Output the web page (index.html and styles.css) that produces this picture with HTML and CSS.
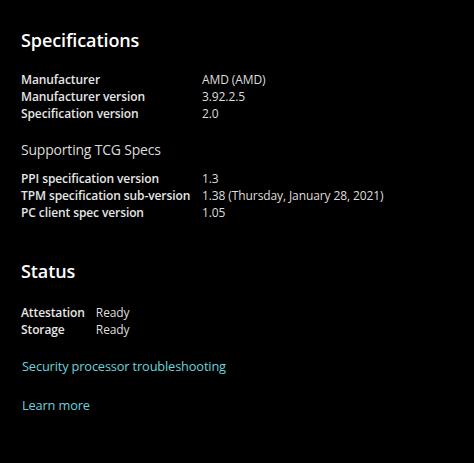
FILE: index.html
```html
<!DOCTYPE html>
<html>
<head>
<meta charset="utf-8">
<link rel="stylesheet" href="styles.css">
</head>
<body>
<main class="page">
  <h1 class="title">Specifications</h1>
  <dl class="props props-wide">
    <dt>Manufacturer</dt><dd>AMD (AMD)</dd>
    <dt>Manufacturer version</dt><dd>3.92.2.5</dd>
    <dt>Specification version</dt><dd>2.0</dd>
  </dl>
  <h2 class="subtitle">Supporting TCG Specs</h2>
  <dl class="props props-wide">
    <dt>PPI specification version</dt><dd>1.3</dd>
    <dt>TPM specification sub-version</dt><dd>1.38 (Thursday, January 28, 2021)</dd>
    <dt>PC client spec version</dt><dd>1.05</dd>
  </dl>
  <h1 class="title title-status">Status</h1>
  <dl class="props props-auto">
    <dt>Attestation</dt><dd>Ready</dd>
    <dt>Storage</dt><dd>Ready</dd>
  </dl>
  <a class="link link-first" href="#">Security processor troubleshooting</a>
  <a class="link link-second" href="#">Learn more</a>
</main>
</body>
</html>
```
FILE: styles.css
```css
html, body {
  margin: 0;
  padding: 0;
  background: #000;
}
body {
  width: 474px;
  height: 463px;
  overflow: hidden;
  font-family: "Open Sans", "Noto Sans", sans-serif;
  color: #e8e8e8;
}
.page {
  padding: 27px 0 0 21px;
  display: flex;
  flex-direction: column;
  align-items: flex-start;
}
.title {
  margin: 0;
  font-size: 18px;
  font-weight: 600;
  line-height: 26px;
  color: #fff;
  letter-spacing: -0.1px;
}
.subtitle {
  margin: 18px 0 0 0;
  font-size: 14px;
  font-weight: 400;
  line-height: 20px;
  color: #dcdcdc;
  letter-spacing: -0.2px;
}
.props {
  display: grid;
  margin: 0;
  font-size: 12px;
  line-height: 17px;
  letter-spacing: -0.1px;
}
.title + .props { margin-top: 18px; }
.subtitle + .props { margin-top: 10px; }
.props-wide { grid-template-columns: 181px auto; }
.props-auto { grid-template-columns: auto auto; column-gap: 11px; margin-top: 20px !important; }
.props dt {
  font-weight: 600;
  color: #e6e6e6;
  white-space: nowrap;
}
.props dd {
  margin: 0;
  font-weight: 400;
  color: #dedede;
  white-space: nowrap;
}
.title-status { margin-top: 37px; }
.link {
  display: block;
  margin-left: 1px;
  font-size: 12.8px;
  line-height: 18px;
  color: #6bd3dd;
  text-decoration: none;
  letter-spacing: -0.15px;
}
.link-first { margin-top: 19px; }
.link-second { margin-top: 21px; }
```
